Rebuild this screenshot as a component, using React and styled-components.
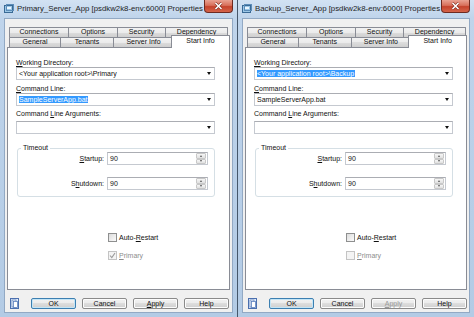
import React from 'react';
import styled, { createGlobalStyle } from 'styled-components';

const GlobalStyle = createGlobalStyle`
  html, body { margin: 0; padding: 0; }
  body {
    font-family: "Liberation Sans", Arial, sans-serif;
    background: #5d7fa6;
  }
  * { box-sizing: border-box; }
`;

const Desktop = styled.div`
  display: flex;
  width: 474px;
  height: 317px;
  overflow: hidden;
`;

const Window = styled.div`
  width: 237px;
  height: 317px;
  flex: none;
  display: flex;
  flex-direction: column;
  padding: 0 4px 4px;
  background: linear-gradient(to bottom, #d2e2f3 0, #bfd4eb 18px, #b3cbe5 100%);
  border-left: ${p => (p.$first ? 'none' : '1px solid #45576b')};
`;

const TitleBar = styled.div`
  height: 18px;
  display: flex;
  align-items: flex-start;
`;

const TitleIcon = styled.svg`
  width: 10px;
  height: 10px;
  margin-top: 4px;
  flex: none;
`;

const TitleText = styled.div`
  flex: 1;
  min-width: 0;
  margin: 4px 0 0 3px;
  font-size: 7.8px;
  line-height: 10px;
  color: #1e1e1e;
  white-space: nowrap;
`;

const CloseButton = styled.div`
  width: 29px;
  height: 13px;
  flex: none;
  display: flex;
  align-items: center;
  justify-content: center;
  border: 1px solid #6e2a20;
  border-top: none;
  border-radius: 0 0 4px 4px;
  background: linear-gradient(to bottom, #e9a292 0, #d8705b 45%, #c5432c 55%, #d5644a 100%);
`;

const Client = styled.div`
  flex: 1;
  display: flex;
  flex-direction: column;
  background: #f0f0f0;
  border: 1px solid #92a9c4;
  padding: 8px 2px 0;
`;

const TabStrip = styled.div`
  display: flex;
  flex-direction: column;
`;

const TabRow = styled.div`
  display: flex;
  height: 10px;
  padding-left: 2px;
`;

const Tab = styled.div`
  position: relative;
  width: ${p => p.$w}px;
  height: ${p => (p.$active ? 13 : 10)}px;
  margin: ${p => (p.$active ? '-2px 0 -1px -3px' : '0 0 0 -1px')};
  &:first-child { margin-left: 0; }
  z-index: ${p => (p.$active ? 2 : 1)};
  border: 1px solid #898c95;
  border-bottom: none;
  border-radius: 1px 1px 0 0;
  background: ${p =>
    p.$active
      ? '#ffffff'
      : 'linear-gradient(to bottom, #f2f2f2 0, #ebebeb 50%, #dddddd 50%, #cfcfcf 100%)'};
  font-size: 7px;
  line-height: ${p => (p.$active ? 10 : 8)}px;
  text-align: center;
  color: #111;
  white-space: nowrap;
`;

const Panel = styled.div`
  height: 243px;
  flex: none;
  display: flex;
  flex-direction: column;
  align-items: flex-start;
  background: #ffffff;
  border: 1px solid #898c95;
  padding: 10px 0 0 8px;
`;

const Label = styled.div`
  font-size: 7px;
  line-height: 9px;
  height: 9px;
  margin-top: ${p => p.$mt || 0}px;
  color: ${p => (p.$disabled ? '#8d8d8d' : '#111')};
  white-space: nowrap;
  u { text-decoration-thickness: 0.5px; text-underline-offset: 1px; }
`;

const Combo = styled.div`
  width: 199px;
  height: 13px;
  margin-top: ${p => p.$mt || 0}px;
  display: flex;
  align-items: center;
  padding-left: 2px;
  background: #fff;
  border: 1px solid #c5c9d0;
  border-top-color: #abadb3;
  font-size: 7px;
  color: #111;
`;

const ComboText = styled.div`
  flex: 1;
  white-space: nowrap;
  overflow: hidden;
  line-height: 9px;
`;

const Selected = styled.span`
  background: #3399ff;
  color: #fff;
  padding: 0 1px 0 0;
`;

const DropArrow = styled.span`
  width: 0;
  height: 0;
  margin-right: 3px;
  border-left: 2.5px solid transparent;
  border-right: 2.5px solid transparent;
  border-top: 3px solid #111;
`;

const Group = styled.fieldset`
  width: 198px;
  margin: 10px 0 0 1px;
  padding: 0 0 6px;
  border: 1px solid #d5dfe5;
  border-radius: 3px;
  min-inline-size: 0;
  display: flex;
  flex-direction: column;
  gap: 12px;
`;

const Legend = styled.legend`
  margin-left: 3px;
  padding: 0 2px;
  font-size: 7px;
  line-height: 8px;
  color: #111;
`;

const SpinRow = styled.div`
  display: flex;
  align-items: center;
  height: 13px;
  gap: 3px;
`;

const SpinLabel = styled.div`
  width: 86px;
  text-align: right;
  font-size: 7px;
  line-height: 9px;
  color: #111;
  u { text-decoration-thickness: 0.5px; text-underline-offset: 1px; }
`;

const SpinBox = styled.div`
  width: 101px;
  height: 13px;
  display: flex;
  align-items: stretch;
  background: #fff;
  border: 1px solid #c5c9d0;
  border-top-color: #abadb3;
`;

const SpinValue = styled.div`
  flex: 1;
  padding-left: 2px;
  font-size: 7px;
  line-height: 11px;
  color: #111;
`;

const SpinButtons = styled.div`
  width: 10px;
  margin-right: 1px;
  display: flex;
  flex-direction: column;
`;

const SpinHalf = styled.div`
  flex: 1;
  display: flex;
  align-items: center;
  justify-content: center;
  border: 1px solid #c8c8c8;
  border-radius: 1px;
  background: linear-gradient(to bottom, #f6f6f6, #e0e0e0);
  &::after {
    content: '';
    width: 0;
    height: 0;
    border-left: 1.5px solid transparent;
    border-right: 1.5px solid transparent;
    ${p => (p.$up ? 'border-bottom: 2px solid #555;' : 'border-top: 2px solid #555;')}
  }
`;

const CheckRow = styled.div`
  display: flex;
  align-items: center;
  gap: 2px;
  height: 9px;
  margin: ${p => p.$mt}px 0 0 92px;
`;

const CheckBox = styled.div`
  width: 9px;
  height: 9px;
  display: flex;
  align-items: center;
  justify-content: center;
  border: 1px solid ${p => (p.$disabled ? '#c4c4c4' : '#8e8f8f')};
  background: ${p =>
    p.$disabled ? '#f4f4f4' : 'linear-gradient(135deg, #dcdcdc, #fbfbfb)'};
`;

const ButtonBar = styled.div`
  display: flex;
  align-items: center;
  margin-top: 8px;
  height: 11px;
  padding-left: 3px;
`;

const SheetIcon = styled.svg`
  width: 9px;
  height: 11px;
  margin-right: 12px;
  flex: none;
`;

const Buttons = styled.div`
  display: flex;
  gap: 6px;
`;

const Button = styled.div`
  width: 45px;
  height: 11px;
  display: flex;
  align-items: center;
  justify-content: center;
  border: 1px solid ${p => (p.$default ? '#3c7fb1' : '#8a8a8a')};
  border-radius: 2px;
  background: linear-gradient(to bottom, #f2f2f2 0, #ebebeb 50%, #dddddd 50%, #cfcfcf 100%);
  box-shadow: ${p => (p.$default ? 'inset 0 0 0 1px #c4e5f6' : 'inset 0 0 0 1px #fcfcfc')};
  font-size: 7px;
  color: ${p => (p.$disabled ? '#9a9a9a' : '#111')};
  u { text-decoration-thickness: 0.5px; text-underline-offset: 1px; }
`;

const AppIcon = () => (
  <TitleIcon viewBox="0 0 10 10">
    <rect x="0.5" y="1.5" width="8" height="7" fill="#9cc7e6" stroke="#3a6a95" />
    <rect x="2" y="3" width="5" height="2" fill="#eaf6ff" />
    <rect x="2.5" y="0.5" width="7" height="6" fill="none" stroke="#5c8cb8" />
  </TitleIcon>
);

const CloseGlyph = () => (
  <svg width="9" height="8" viewBox="0 0 9 8">
    <path d="M1.5 1 L7.5 7 M7.5 1 L1.5 7" stroke="#7a2a1c" strokeWidth="2.6" />
    <path d="M1.5 1 L7.5 7 M7.5 1 L1.5 7" stroke="#ffffff" strokeWidth="1.6" />
  </svg>
);

const PagesIcon = () => (
  <SheetIcon viewBox="0 0 9 11">
    <rect x="0.5" y="0.5" width="8" height="10" fill="#e4eefa" stroke="#4b6fae" />
    <rect x="2" y="2" width="4" height="7" fill="#fff" stroke="#5b7fbe" strokeWidth="0.8" />
    <rect x="3.5" y="3.5" width="4" height="6" fill="#fff" stroke="#5b7fbe" strokeWidth="0.8" />
  </SheetIcon>
);

const CheckMark = () => (
  <svg width="7" height="7" viewBox="0 0 7 7">
    <path d="M1 3.5 L2.8 5.5 L6 1" fill="none" stroke="#9a9a9a" strokeWidth="1.1" />
  </svg>
);

const Spin = ({ label, value }) => (
  <SpinRow>
    <SpinLabel>{label}</SpinLabel>
    <SpinBox>
      <SpinValue>{value}</SpinValue>
      <SpinButtons>
        <SpinHalf $up />
        <SpinHalf />
      </SpinButtons>
    </SpinBox>
  </SpinRow>
);

const ComboField = ({ mt, children }) => (
  <Combo $mt={mt}>
    <ComboText>{children}</ComboText>
    <DropArrow />
  </Combo>
);

const rowOne = [
  ['Connections', 60],
  ['Options', 50],
  ['Security', 49],
  ['Dependency', 63],
];

const rowTwo = [
  ['General', 52],
  ['Tenants', 54],
  ['Server Info', 61],
];

const Dialog = ({ first, name, dirText, dirSelected, cmdSelected, primaryChecked, applyEnabled }) => (
  <Window $first={first}>
    <TitleBar>
      <AppIcon />
      <TitleText>{name} [psdkw2k8-env:6000] Properties</TitleText>
      <CloseButton>
        <CloseGlyph />
      </CloseButton>
    </TitleBar>
    <Client>
      <TabStrip>
        <TabRow>
          {rowOne.map(([t, w]) => (
            <Tab key={t} $w={w}>{t}</Tab>
          ))}
        </TabRow>
        <TabRow>
          {rowTwo.map(([t, w]) => (
            <Tab key={t} $w={w}>{t}</Tab>
          ))}
          <Tab $w={59} $active>Start Info</Tab>
        </TabRow>
      </TabStrip>
      <Panel>
        <Label><u>W</u>orking Directory:</Label>
        <ComboField>
          {dirSelected ? <Selected>{dirText}</Selected> : dirText}
        </ComboField>
        <Label $mt={4}><u>C</u>ommand Line:</Label>
        <ComboField>
          {cmdSelected ? <Selected>SampleServerApp.bat</Selected> : 'SampleServerApp.bat'}
        </ComboField>
        <Label $mt={3}>Command <u>L</u>ine Arguments:</Label>
        <ComboField mt={3} />
        <Group>
          <Legend>Timeout</Legend>
          <Spin label={<><u>S</u>tartup:</>} value="90" />
          <Spin label={<>S<u>h</u>utdown:</>} value="90" />
        </Group>
        <CheckRow $mt={36}>
          <CheckBox />
          <Label>Auto-<u>R</u>estart</Label>
        </CheckRow>
        <CheckRow $mt={9}>
          <CheckBox $disabled>{primaryChecked && <CheckMark />}</CheckBox>
          <Label $disabled><u>P</u>rimary</Label>
        </CheckRow>
      </Panel>
      <ButtonBar>
        <PagesIcon />
        <Buttons>
          <Button $default>OK</Button>
          <Button>Cancel</Button>
          <Button $disabled={!applyEnabled}><u>A</u>pply</Button>
          <Button>Help</Button>
        </Buttons>
      </ButtonBar>
    </Client>
  </Window>
);

export default function App() {
  return (
    <>
      <GlobalStyle />
      <Desktop>
        <Dialog
          first
          name="Primary_Server_App"
          dirText="<Your application root>\Primary"
          cmdSelected
          primaryChecked
          applyEnabled
        />
        <Dialog
          name="Backup_Server_App"
          dirText="<Your application root>\Backup"
          dirSelected
        />
      </Desktop>
    </>
  );
}
